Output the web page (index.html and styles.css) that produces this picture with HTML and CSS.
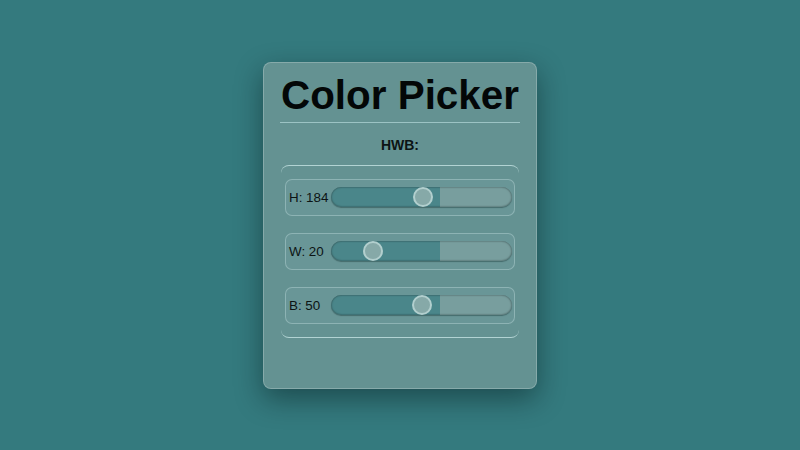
FILE: index.html
```html
<!doctype html>
<html lang="en">
<head>
  <title>Color Picker</title>
  <meta charset="UTF-8">
  <meta name="viewport" content="width=device-width, initial-scale=1">
  <link rel="stylesheet" href="styles.css">
</head>
<body>
  <div class="picker-card">
    <h1>Color Picker</h1>
    <div class="divider"></div>
    <div class="mode-label">HWB:</div>
    <div class="channels">
      <div class="channel">
        <label for="hue" id="hueLabel">H: 184</label>
        <input type="range" id="hue" min="0" max="360" value="184">
      </div>
      <div class="channel">
        <label for="white" id="whiteLabel">W: 20</label>
        <input type="range" id="white" min="0" max="100" value="20">
      </div>
      <div class="channel">
        <label for="black" id="blackLabel">B: 50</label>
        <input type="range" id="black" min="0" max="100" value="50">
      </div>
    </div>
  </div>
  <script>
    // keep the labels in step with the sliders
    const channels = [
      ['hue', 'hueLabel', 'H'],
      ['white', 'whiteLabel', 'W'],
      ['black', 'blackLabel', 'B']
    ];
    channels.forEach(([inputId, labelId, letter]) => {
      const input = document.getElementById(inputId);
      const label = document.getElementById(labelId);
      input.addEventListener('input', () => {
        label.textContent = letter + ': ' + input.value;
      });
    });
  </script>
</body>
</html>
```

FILE: styles.css
```css
body {
  font-family: 'Liberation Sans', Arial, sans-serif;
  background: #347a7e;
  display: flex;
  align-items: center;
  justify-content: center;
  min-height: 100vh;
  margin: 0;
}
.picker-card {
  width: 240px;
  background: #649292;
  border: 1px solid rgba(255, 255, 255, 0.22);
  border-radius: 8px;
  box-shadow: 0 10px 28px rgba(0, 20, 22, 0.45);
  padding: 10px 16px 50px 16px;
  text-align: center;
}
h1 {
  margin: 0;
  font-size: 40.4px;
  line-height: 45px;
  font-weight: 700;
  color: #030707;
}
.divider {
  height: 1px;
  margin-top: 4px;
  background: #9cc3c4;
}
.mode-label {
  margin-top: 14px;
  font-size: 14px;
  line-height: 16px;
  font-weight: 700;
  color: #0c1414;
}
.channels {
  margin: 12px 1px 0 1px;
  padding: 13px 4px;
  border-top: 1px solid #b2d3d3;
  border-bottom: 1px solid #b2d3d3;
  border-radius: 8px;
  display: flex;
  flex-direction: column;
  gap: 17px;
}
.channel {
  display: flex;
  align-items: center;
  height: 35px;
  padding: 0 2px 0 3px;
  background: #699697;
  border: 1px solid rgba(210, 235, 235, 0.35);
  border-radius: 7px;
}
.channel label {
  width: 42px;
  font-size: 13.4px;
  text-align: left;
  color: #0c1414;
}
.channel input[type="range"] {
  -webkit-appearance: none;
  appearance: none;
  flex: 1;
  margin: 0;
  height: 20px;
  border-radius: 10px;
  background: linear-gradient(90deg, #4a868a 60%, #789e9e 60%);
  box-shadow: inset 0 0 2px rgba(0, 0, 0, 0.55), 0 1px 1px rgba(0, 30, 30, 0.35);
  outline: none;
}
.channel input[type="range"]::-webkit-slider-thumb {
  -webkit-appearance: none;
  width: 20px;
  height: 20px;
  border-radius: 50%;
  background: #86a9a8;
  border: 2px solid #b2cfce;
  box-sizing: border-box;
  cursor: pointer;
}
```
